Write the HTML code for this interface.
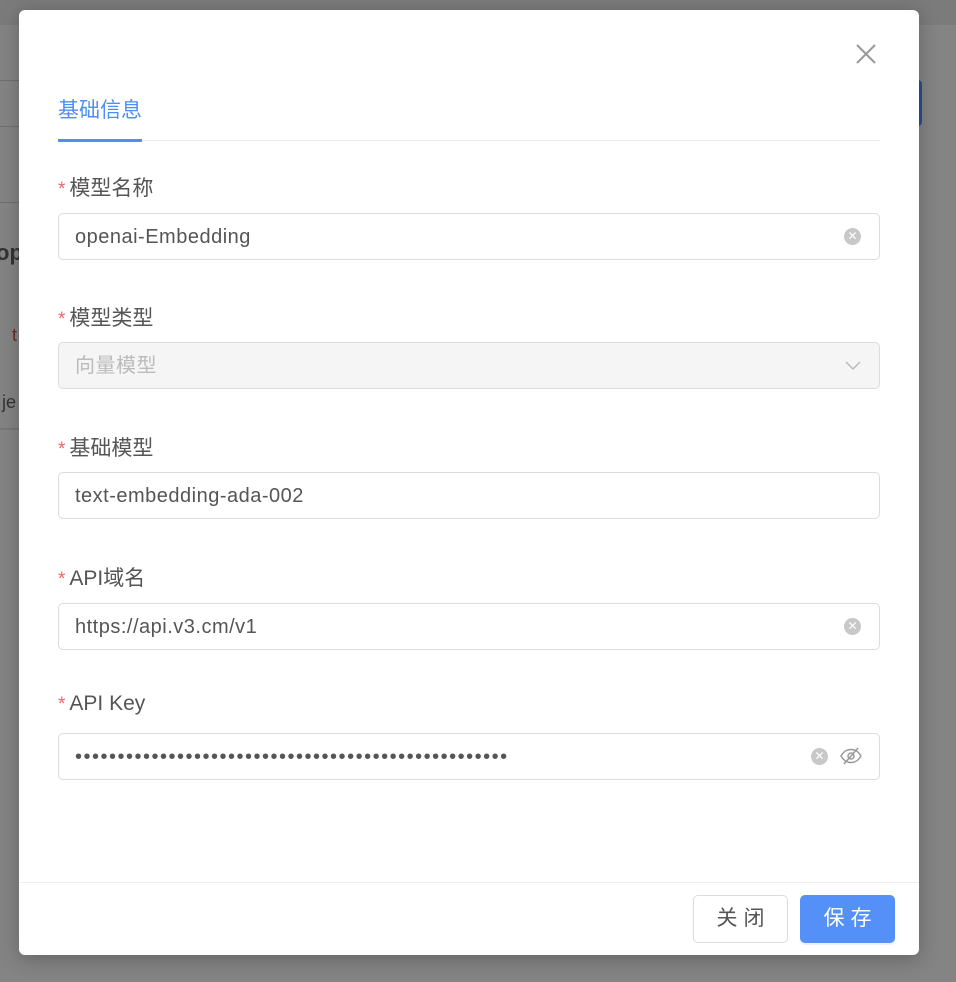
<!DOCTYPE html>
<html><head><meta charset="utf-8"><style>
*{box-sizing:border-box;margin:0;padding:0}
body{width:956px;height:982px;background:#848484;position:relative;overflow:hidden;font-family:"Liberation Sans","Noto Sans CJK SC",sans-serif}
.topbar{position:absolute;left:0;top:0;width:956px;height:25px;background:#7b7b7b}
.ln{position:absolute;left:0;width:20px;height:1px;background:#6f6f6f}
.bbtn{position:absolute;left:912px;top:80px;width:10px;height:46px;background:#2e4f8f;border-radius:4px}
.bg-t{position:absolute;color:#333;font-size:18px}
.modal{position:absolute;left:19px;top:10px;width:900px;height:945px;background:#fff;border-radius:6px;box-shadow:0 4px 20px rgba(0,0,0,.25)}
.close{position:absolute;left:836px;top:33px}
.tab{position:absolute;left:39px;top:84px;font-size:21px;color:#4f8ef7}
.tabline{position:absolute;left:39px;top:130px;width:822px;height:1px;background:#ebebeb}
.tabul{position:absolute;left:39px;top:129px;width:84px;height:3px;background:#4f8ef7}
.lab{position:absolute;left:39px;font-size:21px;color:#555}
.lab b{color:#e66;font-weight:normal;margin-right:4px;font-size:19px}
.inp{position:absolute;left:39px;width:822px;height:47px;border:1px solid #dcdcdc;border-radius:5px;padding-left:16px;line-height:47px;font-size:20px;letter-spacing:0.5px;color:#555}
.dis{background:#f5f5f5;color:#bbb}
.clr{position:absolute;top:14px;width:17px;height:17px;border-radius:50%;background:#c8c8c8;color:#fff;font-size:12px;line-height:17px;text-align:center;letter-spacing:0}
.foot{position:absolute;left:0;top:872px;width:900px;height:1px;background:#eee}
.btn{position:absolute;top:885px;width:95px;height:48px;border-radius:5px;font-size:21px;text-align:center;line-height:48px;letter-spacing:6px;padding-left:6px}
</style></head><body>
<div class="topbar"></div>
<div class="ln" style="top:80px"></div><div class="ln" style="top:126px"></div><div class="ln" style="top:202px"></div>
<div class="bbtn"></div>
<div class="bg-t" style="left:-4px;top:240px;font-weight:bold;font-size:22px">op</div>
<div class="bg-t" style="left:12px;top:325px;color:#6a2a2a">t</div>
<div class="bg-t" style="left:2px;top:392px">je</div>
<div style="position:absolute;left:0;top:428px;width:20px;height:2px;background:#777"></div>
<div class="modal">
<svg class="close" width="22" height="22" viewBox="0 0 22 22"><path d="M2 2L20 20M20 2L2 20" stroke="#999" stroke-width="2"/></svg>
<div class="tab">基础信息</div>
<div class="tabline"></div><div class="tabul"></div>

<div class="lab" style="top:162px"><b>*</b>模型名称</div>
<div class="inp" style="top:203px">openai-Embedding<div class="clr" style="left:785px">✕</div></div>

<div class="lab" style="top:292px"><b>*</b>模型类型</div>
<div class="inp dis" style="top:332px">向量模型<svg style="position:absolute;left:786px;top:16px" width="16" height="12" viewBox="0 0 16 12"><path d="M1 3L8 10L15 3" stroke="#bbb" stroke-width="1.5" fill="none"/></svg></div>

<div class="lab" style="top:422px"><b>*</b>基础模型</div>
<div class="inp" style="top:462px">text-embedding-ada-002</div>

<div class="lab" style="top:552px"><b>*</b>API域名</div>
<div class="inp" style="top:593px">https://api.v3.cm/v1<div class="clr" style="left:785px">✕</div></div>

<div class="lab" style="top:682px"><b>*</b>API Key</div>
<div class="inp" style="top:723px;letter-spacing:1.5px;font-size:20px">•••••••••••••••••••••••••••••••••••••••••••••••••••<div class="clr" style="left:752px">✕</div><svg style="position:absolute;left:781px;top:12px" width="22" height="20" viewBox="0 0 22 20"><path d="M1 10C4 5 7 3.5 11 3.5S18 5 21 10C18 15 15 16.5 11 16.5S4 15 1 10Z" stroke="#999" stroke-width="1.5" fill="none"/><circle cx="11" cy="10" r="3" stroke="#999" stroke-width="1.5" fill="none"/><path d="M4 18L18 2" stroke="#999" stroke-width="1.5"/></svg></div>

<div class="foot"></div>
<div class="btn" style="left:674px;border:1px solid #dcdcdc;color:#555;line-height:46px">关闭</div>
<div class="btn" style="left:781px;background:#558ff8;color:#fff;box-shadow:0 2px 0 #eaf2fe">保存</div>
</div>
</body></html>
